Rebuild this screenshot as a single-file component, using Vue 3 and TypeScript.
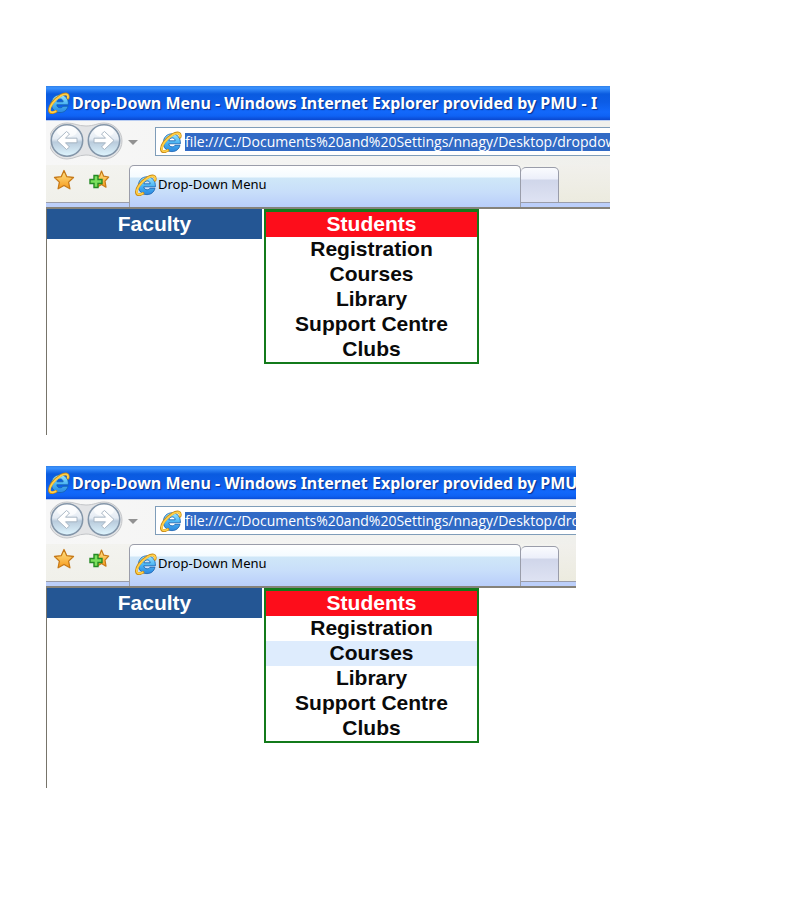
<script setup lang="ts">
interface BrowserView {
  id: string
  active: string
}

const views: BrowserView[] = [
  { id: 'first', active: '' },
  { id: 'second', active: 'Courses' },
]
const items: string[] = ['Registration', 'Courses', 'Library', 'Support Centre', 'Clubs']
const title = 'Drop-Down Menu - Windows Internet Explorer provided by PMU - I'
const address = 'file:///C:/Documents%20and%20Settings/nnagy/Desktop/dropdown'
</script>

<template>
  <main class="sheet">
    <svg class="defs" aria-hidden="true">
      <defs>
        <linearGradient id="ieBlue" x1="0" y1="0" x2="0" y2="1">
          <stop offset="0" stop-color="#9be6fd" />
          <stop offset=".5" stop-color="#4db6f3" />
          <stop offset="1" stop-color="#2a86de" />
        </linearGradient>
        <linearGradient id="orb" x1="0" y1="0" x2="0" y2="1">
          <stop offset="0" stop-color="#fdfeff" />
          <stop offset=".45" stop-color="#e4ebf3" />
          <stop offset=".55" stop-color="#b9cbdc" />
          <stop offset="1" stop-color="#dff6ff" />
        </linearGradient>
        <linearGradient id="gold" x1="0" y1="0" x2="0" y2="1">
          <stop offset="0" stop-color="#ffe58a" />
          <stop offset="1" stop-color="#f79a1c" />
        </linearGradient>
        <symbol id="ie" viewBox="0 0 22 22">
          <path
            d="M12 2.800c5.200 0 8.700 3.900 8.400 10H8.800c.2 2 1.500 3 3.400 3 1.300 0 2.200-.5 2.800-1.500h5c-1.100 4.100-4.100 6.300-8 6.300-5.200 0-8.600-3.600-8.600-8.900S6.900 2.800 12 2.800ZM8.900 9.800h6.300c-.3-1.900-1.400-2.900-3-2.900s-2.900 1-3.300 2.900Z"
            fill="url(#ieBlue)" fill-rule="evenodd" stroke="#155fae" stroke-width=".8"
          />
          <path
            d="M20 6.200C21.200 1.600 17.400.8 12.400 3.600 5.600 7.600.4 15.200 1.600 19.200c.8 2.400 3.800 1.700 6.400.2"
            fill="none" stroke="#c98a14" stroke-width="2.800" stroke-linecap="round"
          />
          <path
            d="M19.900 5.800C20.700 2 17.300 1.200 12.600 3.900 6 7.900.9 15.200 2 19c.7 2 3.200 1.600 5.600.4"
            fill="none" stroke="#ffd04a" stroke-width="1.800" stroke-linecap="round"
          />
        </symbol>
      </defs>
    </svg>

    <section v-for="view in views" :key="view.id" class="browser" :class="view.id">
      <header class="titlebar">
        <svg class="ie"><use href="#ie" /></svg>
        <h2>{{ title }}</h2>
      </header>

      <div class="toolbar">
        <div class="history">
          <svg viewBox="0 0 74 38" class="capsule" aria-hidden="true">
            <path
              d="M17 1C24 1 28 4 36 4S48 1 54 1a17.500 17.500 0 0 1 0 36C47 37 44 33 36 33s-12 4-19 4A17.500 17.500 0 0 1 17 1Z"
              fill="#e3e4e6" stroke="#c3c5c8"
            />
            <g v-for="x in [17, 54]" :key="x">
              <circle :cx="x" cy="18.500" r="15.700" fill="url(#orb)" stroke="#8496a9" stroke-width="1.500" />
              <ellipse :cx="x" cy="9.500" rx="10" ry="5.500" fill="#fff" opacity=".7" />
            </g>
            <path
              d="M7 18.500 16.500 9.500 19.500 12 15.500 16.200H27V20.800H15.500L19.500 25 16.500 27.500Z"
              fill="#fff" stroke="#a3b1bf" stroke-width=".9" stroke-linejoin="round"
            />
            <path
              d="M64 18.500 54.500 9.500 51.500 12 55.500 16.200H44V20.800H55.500L51.500 25 54.500 27.500Z"
              fill="#fff" stroke="#a3b1bf" stroke-width=".9" stroke-linejoin="round"
            />
          </svg>
          <button type="button" class="orb" aria-label="Back"></button>
          <button type="button" class="orb" aria-label="Forward"></button>
        </div>
        <button type="button" class="recent" aria-label="Recent pages">
          <svg viewBox="0 0 10 5" width="10" height="5"><path d="M0 0H10L5 5Z" fill="#929292" /></svg>
        </button>
        <div class="address">
          <svg class="ie"><use href="#ie" /></svg>
          <input type="text" :value="address" aria-label="Address" spellcheck="false" />
        </div>
      </div>

      <div class="tabs">
        <div class="favorites">
          <button type="button" aria-label="Favorites">
            <svg viewBox="0 0 22 22" width="22" height="22">
              <path
                d="m11 1.500 2.800 6.200 6.700.8-4.900 4.600 1.300 6.700L11 16.500l-5.900 3.300 1.300-6.700L1.500 8.500l6.700-.8Z"
                fill="url(#gold)" stroke="#c77a18" stroke-width="1.300" stroke-linejoin="round"
              />
            </svg>
          </button>
          <button type="button" aria-label="Add to favorites">
            <svg viewBox="0 0 22 22" width="22" height="22">
              <path
                d="m13.500 2 2.200 5.200 5 .8-3.700 4.200 1 6-4.500-2.700-4.500 2.700 1-6L6.500 8l5-.8Z"
                fill="url(#gold)" stroke="#c77a18" stroke-width="1.200" stroke-linejoin="round"
              />
              <path
                d="M6 6.500h4v4h4v4h-4v4H6v-4H2v-4h4Z"
                fill="#7be05e" stroke="#258a25" stroke-width="1.400"
              />
            </svg>
          </button>
        </div>
        <button type="button" class="tab">
          <svg class="ie"><use href="#ie" /></svg>
          <span>Drop-Down Menu</span>
        </button>
        <button type="button" class="new-tab" aria-label="New tab"></button>
        <div class="strip-end"></div>
      </div>

      <nav class="page">
        <a href="#faculty" class="faculty">Faculty</a>
        <div class="students">
          <a href="#students" class="heading">Students</a>
          <a
            v-for="item in items"
            :key="item"
            href="#students"
            class="item"
            :class="{ active: item === view.active }"
          >{{ item }}</a>
        </div>
      </nav>
    </section>
  </main>
</template>

<style>
body {
  background: #fff;
}
</style>

<style scoped>
* {
  box-sizing: border-box;
}

.sheet {
  display: flex;
  flex-direction: column;
  gap: 31px;
  padding: 86px 46px;
  font-family: "Noto Sans", "Open Sans", sans-serif;
}

.defs {
  position: absolute;
  width: 0;
  height: 0;
}

button {
  margin: 0;
  padding: 0;
  border: 0;
  background: none;
  font: inherit;
  color: inherit;
}

a {
  color: inherit;
  text-decoration: none;
}

.ie {
  flex: none;
  width: 22px;
  height: 22px;
}

.browser {
  width: 100%;
  max-width: 564px;
  overflow: hidden;
}

.browser.second {
  max-width: 530px;
}

.titlebar {
  display: flex;
  align-items: center;
  gap: 2px;
  height: 34px;
  padding-left: 2px;
  background: linear-gradient(#2f7fe8 0, #3b93ff 2px, #0a5be0 8px, #0c5ce6 16px, #1268fb 26px, #0f62f4 30px, #0a48cf 34px);
}

.second .titlebar {
  height: 33px;
}

h2 {
  margin: 0;
  font-size: 16px;
  line-height: 24px;
  font-weight: 700;
  color: #fff;
  white-space: nowrap;
  text-shadow: 1px 1px 1px #0a2f8c;
}

.toolbar {
  display: flex;
  height: 45px;
  padding-left: 4px;
  border-top: 1px solid #b9cdf2;
  background: linear-gradient(90deg, #f7f7f7, #f0f0ec);
}

.history {
  position: relative;
  display: flex;
  width: 74px;
  height: 38px;
  margin-top: 1px;
}

.capsule {
  position: absolute;
  width: 74px;
  height: 38px;
}

.orb {
  position: relative;
  width: 37px;
  height: 37px;
  border-radius: 50%;
}

.recent {
  display: flex;
  align-items: center;
  justify-content: center;
  width: 18px;
  height: 42px;
}

.address {
  display: flex;
  flex: 1;
  align-items: center;
  gap: 3px;
  height: 29px;
  margin: 6px 0 0 13px;
  padding-left: 4px;
  border: 1px solid #7f9db9;
  border-right: 0;
  background: #fff;
}

input {
  flex: 1;
  min-width: 0;
  height: 18px;
  padding: 0;
  border: 0;
  outline: 0;
  background: #316ac5;
  color: #fff;
  font-family: "Open Sans", "Noto Sans", sans-serif;
  font-size: 14px;
}

.tabs {
  display: flex;
  height: 44px;
  border-bottom: 2px solid #85827a;
  background: linear-gradient(#f3f3ef 0, #f0f0ea 37px, #bccffa 37px);
}

.favorites {
  display: flex;
  gap: 13px;
  width: 83px;
  height: 38px;
  padding: 4px 0 0 7px;
  border-bottom: 1px solid #9a9daa;
}

.favorites button {
  width: 22px;
  height: 22px;
}

.tab {
  display: flex;
  flex: none;
  gap: 1px;
  width: 392px;
  padding: 8px 0 0 5px;
  border: 1px solid #9a9daa;
  border-bottom: 0;
  border-radius: 5px 5px 0 0;
  background: linear-gradient(#fff 0, #f4fbff 11px, #cfe7f8 12px, #c8defa 26px, #b8cdfa 42px);
  font-size: 13px;
  line-height: 20px;
  text-align: left;
}

.new-tab {
  flex: none;
  width: 38px;
  height: 36px;
  margin-top: 2px;
  border: 1px solid #9a9daa;
  border-left: 0;
  border-radius: 5px 5px 0 0;
  background: linear-gradient(#fafbfe 0, #eceffa 11px, #d0d6ea 12px, #dfe3f3 35px);
}

.strip-end {
  flex: 1;
  height: 38px;
  border-bottom: 1px solid #9a9daa;
  background: linear-gradient(#f1f0ec, #ecebdf);
}

.page {
  display: flex;
  align-items: flex-start;
  gap: 2px;
  min-height: 226px;
  border-left: 1px solid #77746a;
  font-family: "Liberation Sans", Arial, sans-serif;
  font-size: 21px;
  line-height: 24px;
  font-weight: 700;
  text-align: center;
}

.second .page {
  min-height: 200px;
}

.faculty {
  width: 215px;
  height: 30px;
  padding-top: 3px;
  background: #245694;
  color: #fff;
}

.students {
  display: flex;
  flex-direction: column;
  width: 215px;
  border: solid #137a1b;
  border-width: 3px 2px 2px;
}

.heading,
.item {
  padding-bottom: 1px;
}

.heading {
  background: #fd0d1b;
  color: #fff;
}

.item {
  color: #0a0a0a;
}

.active {
  background: #deecfd;
}
</style>
